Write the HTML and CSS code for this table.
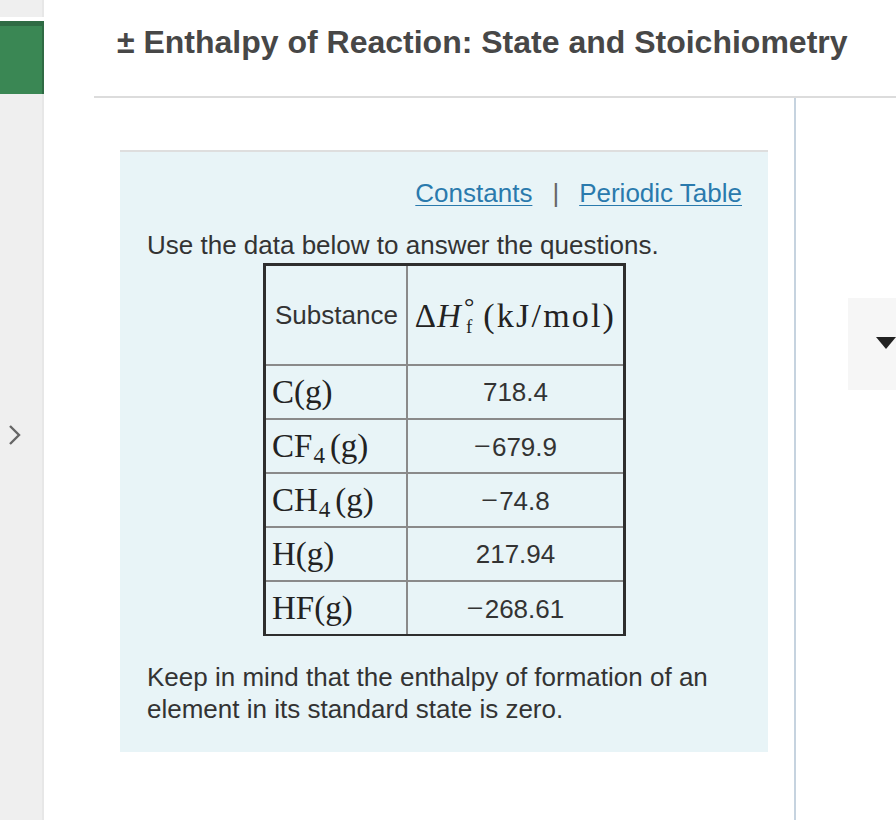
FILE: index.html
```html
<!DOCTYPE html>
<html lang="en">
<head>
<meta charset="utf-8">
<title>Enthalpy of Reaction</title>
<link rel="stylesheet" href="styles.css">
</head>
<body>
<div class="page">
  <aside class="sidebar">
    <div class="tab"></div>
    <svg class="chev" width="14" height="22" viewBox="0 0 14 22"><polyline points="2,2 11,11 2,20" fill="none" stroke="#666" stroke-width="2.4"/></svg>
  </aside>
  <main class="main">
    <header class="head">
      <h1 class="title">± Enthalpy of Reaction: State and Stoichiometry</h1>
    </header>
    <div class="body">
      <section class="content">
        <div class="panel">
          <div class="links"><a class="link">Constants</a><span class="sep">|</span><a class="link">Periodic Table</a></div>
          <p class="intro">Use the data below to answer the questions.</p>
          <table class="data">
            <tr>
              <th class="c1 hd">Substance</th>
              <th class="c2 hd"><span class="math">Δ<i class="var">H</i><span class="ss"><span class="sup">°</span><span class="sub">f</span></span><span class="unit">(kJ/mol)</span></span></th>
            </tr>
            <tr><td class="c1"><span class="math">C(g)</span></td><td class="c2 val">718.4</td></tr>
            <tr><td class="c1"><span class="math">CF<sub class="n">4</sub>(g)</span></td><td class="c2 val"><span class="minus">−</span>679.9</td></tr>
            <tr><td class="c1"><span class="math">CH<sub class="n">4</sub>(g)</span></td><td class="c2 val"><span class="minus">−</span>74.8</td></tr>
            <tr><td class="c1"><span class="math">H(g)</span></td><td class="c2 val">217.94</td></tr>
            <tr class="last"><td class="c1"><span class="math">HF(g)</span></td><td class="c2 val"><span class="minus">−</span>268.61</td></tr>
          </table>
          <p class="note">Keep in mind that the enthalpy of formation of an element in its standard state is zero.</p>
        </div>
      </section>
      <div class="side">
        <div class="dropdown"><span class="tri"></span></div>
      </div>
    </div>
  </main>
</div>
</body>
</html>
```

FILE: styles.css
```css
html, body {
  margin: 0;
  padding: 0;
  background: #fff;
}
body {
  font-family: "Liberation Sans", Arial, Helvetica, sans-serif;
  color: #333;
}
.page {
  display: flex;
  width: 896px;
  height: 820px;
  overflow: hidden;
}
.sidebar {
  width: 44px;
  flex: 0 0 44px;
  background: #efefef;
  box-shadow: inset -2px 0 #e7e7e7;
  display: flex;
  flex-direction: column;
}
.tab {
  margin-top: 17px;
  border-top: 4px solid #fff;
  height: 73px;
  background: #3a8754;
  box-shadow: inset 0 5px #2f6b44, inset -2px 0 #2f6b44;
}
.chev {
  margin-top: 330px;
  margin-left: 8px;
}
.main {
  margin-left: 50px;
  flex: 1;
  display: flex;
  flex-direction: column;
}
.head {
  padding: 23px 0 35px 23px;
  border-bottom: 2px solid #dcdcdc;
}
.title {
  margin: 0;
  font-size: 32px;
  line-height: 38px;
  font-weight: bold;
  color: #474747;
  white-space: nowrap;
}
.body {
  display: flex;
  flex: 1;
}
.content {
  width: 674px;
  flex: 0 0 674px;
  padding: 52px 0 0 26px;
  border-right: 2px solid #c6d3df;
}
.panel {
  width: 595px;
  border-top: 2px solid #dedede;
  background: #e8f4f7;
  padding: 26px 26px 27px 27px;
}
.links {
  text-align: right;
  font-size: 26px;
  line-height: 30px;
}
.link {
  color: #2a7aad;
  text-decoration: underline;
  text-underline-offset: 3px;
  text-decoration-thickness: 1px;
}
.sep {
  color: #666;
  margin: 0 20px;
}
.intro {
  margin: 22px 0 3px;
  font-size: 26px;
  line-height: 30px;
  color: #333;
}
.data {
  margin: 0 auto;
  border: 3px solid #2e2e2e;
  border-bottom-width: 2px;
  border-spacing: 0;
  width: 363px;
  table-layout: fixed;
}
.data td, .data th {
  box-sizing: border-box;
  padding: 0;
  border-bottom: 2px solid #8a8a8a;
  vertical-align: middle;
  font-weight: normal;
}
.data .last td {
  border-bottom: none;
  height: 52px;
}
.data td {
  height: 54px;
}
.data .hd {
  height: 100px;
}
.c1 {
  width: 142px;
  border-right: 2px solid #8a8a8a;
  text-align: left;
  padding-left: 6px !important;
}
.c1.hd {
  padding-left: 9px !important;
  font-size: 26px;
  color: #333;
}
.c2 {
  text-align: center;
}
.val {
  font-size: 26px;
  color: #333;
}
.minus {
  font-family: "Liberation Serif", "Times New Roman", serif;
  font-size: 30px;
  margin-right: 1px;
}
.math {
  font-family: "Liberation Serif", "Times New Roman", serif;
  font-size: 33px;
  color: #222;
  white-space: nowrap;
}
.math .n {
  font-size: 23px;
  vertical-align: -6px;
  line-height: 0;
  margin: 0 5px 0 1px;
}
.var {
  font-style: italic;
  margin-left: 1px;
}
.ss {
  display: inline-block;
  vertical-align: -6px;
  margin-left: 3px;
  margin-right: 9px;
}
.sup {
  display: block;
  font-size: 26px;
  line-height: 24px;
}
.sub {
  display: block;
  font-size: 19px;
  line-height: 15px;
}
.unit {
  font-size: 34px;
  letter-spacing: 2.2px;
}
.side {
  flex: 1;
  overflow: hidden;
  padding-top: 200px;
  padding-left: 52px;
}
.dropdown {
  height: 92px;
  width: 60px;
  background: #f6f6f6;
  box-sizing: border-box;
  padding: 39px 0 0 28px;
}
.tri {
  display: block;
  width: 0;
  height: 0;
  border-left: 10px solid transparent;
  border-right: 10px solid transparent;
  border-top: 12px solid #222;
}
.note {
  margin: 25px 0 0;
  font-size: 26px;
  line-height: 32px;
  color: #333;
}
```
